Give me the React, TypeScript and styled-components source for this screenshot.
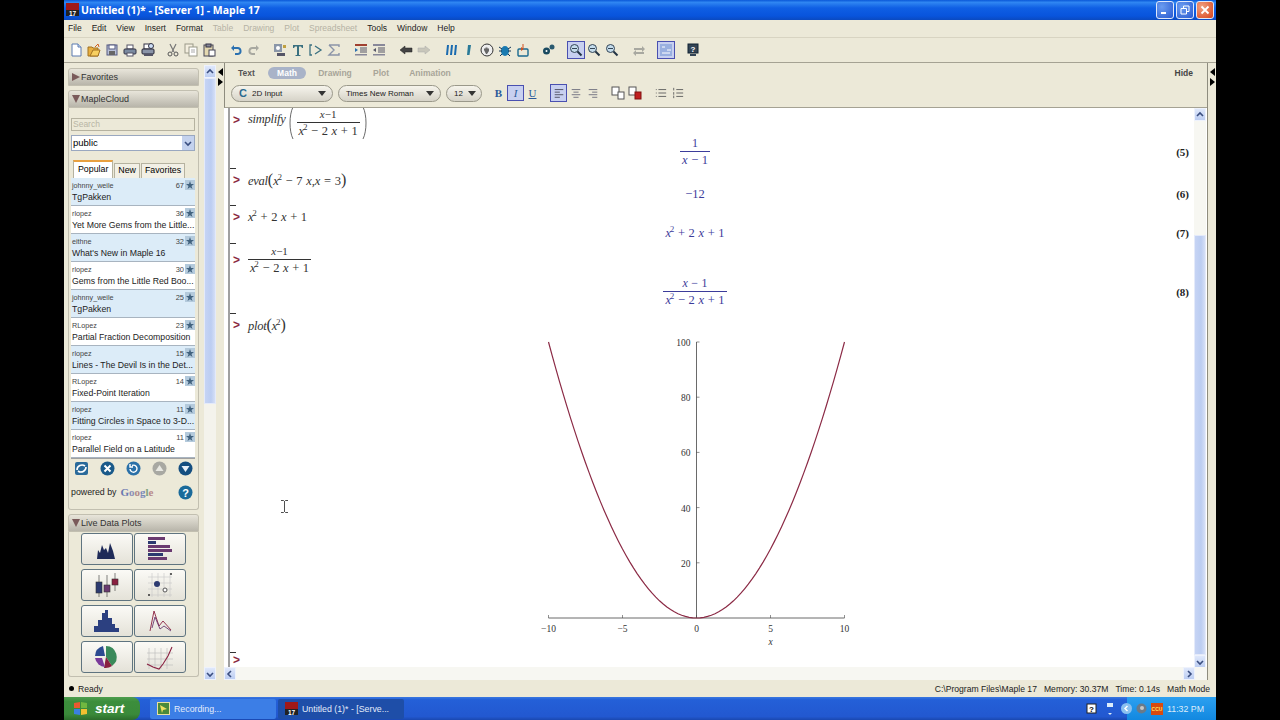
import React from "react";
import styled, {createGlobalStyle} from "styled-components";

const GlobalStyle = createGlobalStyle`
  html, body {
    margin: 0;
    padding: 0;
    background: #000;
  }
  body {
    font-family: "Liberation Sans", "DejaVu Sans", sans-serif;
  }
`;

const Screen = styled.div`
  width: 1280px;
  height: 720px;
  background: #000;
  display: flex;
  justify-content: center;
  overflow: hidden;
`;

const Desk = styled.div`
  width: 1152px;
  height: 720px;
  display: flex;
  flex-direction: column;
  background: #ece9d8;
  position: relative;
`;

/* title bar */
const TitleBar = styled.div`
  height: 20px;
  display: flex;
  align-items: center;
  padding: 0 2px;
  background: linear-gradient(180deg, #0a58d8 0%, #2f86f2 12%, #0f5fe4 40%, #0854dc 80%, #0a4ac0 100%);
`;

const TitleText = styled.span`
  flex: 1;
  margin-left: 2px;
  color: #fff;
  font: bold 10.5px "Open Sans", "Liberation Sans", sans-serif;
  white-space: nowrap;
`;

const WinButton = styled.div<{ $close?: boolean }>`
  width: 16px;
  height: 16px;
  margin-left: 2px;
  border: 1px solid #dfe8fa;
  border-radius: 3px;
  background: ${p => p.$close
    ? "radial-gradient(circle at 30% 30%, #f0a080, #d8441c)"
    : "radial-gradient(circle at 30% 30%, #6a9cf0, #2a5ad0)"};
  display: flex;
  align-items: center;
  justify-content: center;
`;

/* menu */
const MenuBar = styled.div`
  height: 17px;
  display: flex;
  align-items: center;
  padding-left: 4px;
  gap: 10px;
  font-size: 8.5px;
  color: #222;
  border-bottom: 1px solid #d8d4c2;
`;

const MenuItem = styled.span<{ $off?: boolean }>`
  color: ${p => p.$off ? "#b5b2a4" : "#222"};
`;

/* main toolbar */
const ToolBar = styled.div`
  height: 25px;
  display: flex;
  align-items: center;
  padding-left: 3px;
  border-bottom: 1px solid #a5a293;
`;

const ToolGroup = styled.div<{ $after: number }>`
  display: flex;
  align-items: center;
  margin-right: ${p => p.$after}px;
`;

const Tool = styled.div<{ $on?: boolean; $w?: number }>`
  width: ${p => p.$w ?? 18}px;
  height: 18px;
  box-sizing: border-box;
  display: flex;
  align-items: center;
  justify-content: center;
  border: 1px solid ${p => p.$on ? "#4a50b0" : "transparent"};
  background: ${p => p.$on ? "#c8d0f0" : "transparent"};
`;

/* body */
const Body = styled.div`
  height: 617px;
  display: flex;
`;

const Side = styled.div`
  width: 140px;
  box-sizing: border-box;
  padding: 5px 5px 3px 4px;
  display: flex;
  flex-direction: column;
  gap: 4px;
`;

const PanelHead = styled.div`
  height: 18px;
  box-sizing: border-box;
  display: flex;
  align-items: center;
  gap: 1px;
  padding-left: 3px;
  border: 1px solid #c2bfb0;
  border-radius: 3px 3px 0 0;
  background: linear-gradient(180deg, #e8e5da, #b8b5aa);
  font-size: 9px;
  color: #333;
`;

const Arrow = styled.span<{ $open?: boolean }>`
  width: 0;
  height: 0;
  ${p => p.$open
    ? "border-left: 4px solid transparent; border-right: 4px solid transparent; border-top: 8px solid #7a5a5a;"
    : "border-top: 4px solid transparent; border-bottom: 4px solid transparent; border-left: 8px solid #7a5a5a;"}
`;

const Panel = styled.div`
  box-sizing: border-box;
  border: 1px solid #c2bfb0;
  border-top: 0;
  border-radius: 0 0 3px 3px;
  display: flex;
  flex-direction: column;
`;

const CloudBody = styled(Panel)`
  height: 402px;
  padding: 10px 2px 0 2px;
`;

const SearchBox = styled.div`
  height: 13px;
  margin-right: 1px;
  box-sizing: border-box;
  border: 1px solid #b5b2a0;
  color: #b8b5a5;
  font-size: 8.5px;
  line-height: 11px;
  padding-left: 1px;
`;

const PublicBox = styled.div`
  height: 16px;
  margin: 4px 1px 0 0;
  box-sizing: border-box;
  border: 1px solid #9aa8c0;
  background: #fff;
  font-size: 9.5px;
  line-height: 14px;
  padding-left: 1px;
  display: flex;
  justify-content: space-between;
`;

const DropBtn = styled.div`
  width: 12px;
  background: #c4d2ee;
  display: flex;
  align-items: center;
  justify-content: center;
`;

const Tabs = styled.div`
  display: flex;
  align-items: flex-end;
  height: 19px;
  margin-top: 8px;
  padding-left: 2px;
  gap: 1px;
`;

const TabItem = styled.div<{ $on?: boolean }>`
  height: ${p => p.$on ? 18 : 15}px;
  box-sizing: border-box;
  padding: 0 ${p => p.$on ? 4 : 3}px;
  font-size: 8.8px;
  line-height: ${p => p.$on ? 15 : 13}px;
  border: 1px solid #b5b2a0;
  border-bottom: 0;
  border-top: ${p => p.$on ? "2px solid #e8a040" : "1px solid #b5b2a0"};
  background: ${p => p.$on ? "#fff" : "#f2f0e6"};
`;

const List = styled.div`
  height: 280px;
  margin-right: 1px;
  border-bottom: 1px solid #a0a0a0;
  display: flex;
  flex-direction: column;
  overflow: hidden;
`;

const ListRow = styled.div<{ $tint: boolean }>`
  height: 28px;
  flex: none;
  box-sizing: border-box;
  padding: 1px 0 0 1px;
  border-bottom: 1px solid #a8b4c0;
  background: ${p => p.$tint ? "#dcecf8" : "#fff"};
`;

const RowTop = styled.div`
  height: 12px;
  display: flex;
  align-items: center;
  justify-content: space-between;
  font-size: 7.2px;
  color: #444;
`;

const RowCount = styled.span`
  display: flex;
  align-items: center;
  gap: 1px;
  font-size: 7.5px;
`;

const RowTitle = styled.div`
  font-size: 8.7px;
  line-height: 13px;
  color: #222;
  white-space: nowrap;
`;

const NavRow = styled.div`
  height: 19px;
  padding: 0 3px;
  display: flex;
  align-items: center;
  justify-content: space-between;
`;

const PoweredRow = styled.div`
  height: 24px;
  margin-top: 2px;
  padding: 0 3px 0 0;
  display: flex;
  align-items: center;
  font-size: 8.8px;
  color: #222;
  gap: 4px;
`;

const GoogleWord = styled.span`
  flex: 1;
  font: bold 11px "Liberation Serif", serif;
`;

const GoogleLetter = styled.span<{ $c: string }>`
  color: ${p => p.$c};
`;

const LiveBody = styled(Panel)`
  height: 145px;
  padding: 1px 0 0 12px;
  display: grid;
  grid-template-columns: 52px 52px;
  grid-auto-rows: 32px;
  gap: 4px 1px;
  align-content: start;
`;

const PlotBtn = styled.div`
  box-sizing: border-box;
  border: 1px solid #5f7480;
  border-radius: 3px;
  background: linear-gradient(180deg, #fbfaf6, #e4e2d8);
  display: flex;
  align-items: center;
  justify-content: center;
`;

const ScrollCol = styled.div`
  width: 12px;
  margin-top: 2px;
  height: 615px;
  display: flex;
  flex-direction: column;
  background: #f4f3ec;
`;

const ScrollBtn = styled.div<{ $side?: boolean }>`
  flex: none;
  width: ${p => p.$side ? "12px" : "auto"};
  height: ${p => p.$side ? "auto" : "13px"};
  background: linear-gradient(180deg, #dfe8fb, #bccdf2);
  border: 1px solid #eef2fc;
  box-sizing: border-box;
  display: flex;
  align-items: center;
  justify-content: center;
`;

const ScrollThumb = styled.div<{ $h: number }>`
  height: ${p => p.$h}px;
  flex: none;
  background: linear-gradient(90deg, #c6d4f4, #bccdf2 60%, #d5dff6);
  border: 1px solid #e4eafa;
  box-sizing: border-box;
`;

const ScrollRest = styled.div<{ $h?: number }>`
  flex: ${p => p.$h ? "none" : 1};
  height: ${p => p.$h ? `${p.$h}px` : "auto"};
`;

const Splitter = styled.div`
  width: 8px;
  padding: 5px 0 0 2px;
  box-sizing: border-box;
  display: flex;
  flex-direction: column;
  gap: 2px;
`;

const Tri = styled.span<{ $dir: "l" | "r" }>`
  width: 0;
  height: 0;
  border-top: 4px solid transparent;
  border-bottom: 4px solid transparent;
  ${p => p.$dir === "l" ? "border-right: 5px solid #000;" : "border-left: 5px solid #000;"}
`;

const Main = styled.div`
  width: 984px;
  display: flex;
  flex-direction: column;
  border-right: 1px solid #8e8c7e;
  box-sizing: border-box;
`;

const PaletteTop = styled.div`
  height: 45px;
  flex: none;
  box-sizing: border-box;
  border-bottom: 1px solid #a5a293;
  border-left: 1px solid #8e8c7e;
`;

const ModeRow = styled.div`
  height: 19px;
  display: flex;
  align-items: center;
  padding-left: 13px;
  font-size: 8.5px;
  font-weight: bold;
  color: #a8a598;
`;

const ModeTab = styled.span<{ $on?: boolean; $dark?: boolean; $w: number }>`
  width: ${p => p.$w}px;
  height: 12px;
  line-height: 12px;
  text-align: ${p => p.$dark ? "left" : "center"};
  border-radius: 6px;
  color: ${p => p.$on ? "#fff" : p.$dark ? "#555" : "#a8a598"};
  background: ${p => p.$on ? "#a9b3c8" : "transparent"};
`;

const HideLabel = styled.span`
  margin-left: auto;
  margin-right: 14px;
  color: #444;
`;

const CtxRow = styled.div`
  height: 22px;
  display: flex;
  align-items: center;
  padding-left: 6px;
`;

const Pill = styled.div<{ $w: number }>`
  width: ${p => p.$w}px;
  height: 17px;
  box-sizing: border-box;
  margin-right: 5px;
  padding: 0 6px 0 7px;
  border: 1px solid #9a988a;
  border-radius: 9px;
  background: linear-gradient(180deg, #f6f4ec, #d6d3c8);
  display: flex;
  align-items: center;
  gap: 5px;
  font-size: 8px;
  color: #222;
`;

const InputMark = styled.b`
  color: #2a6a90;
  font-size: 11px;
`;

const PillArrow = styled.span`
  margin-left: auto;
  border-left: 4px solid transparent;
  border-right: 4px solid transparent;
  border-top: 5px solid #333;
`;

const CtxGroup = styled.div<{ $m: number }>`
  display: flex;
  align-items: center;
  margin-left: ${p => p.$m}px;
`;

const FmtBtn = styled(Tool)<{ $i?: boolean; $b?: boolean; $u?: boolean }>`
  width: 17px;
  height: 16px;
  font: ${p => p.$b ? "bold" : "normal"} 11px "Liberation Serif", serif;
  font-style: ${p => p.$i ? "italic" : "normal"};
  text-decoration: ${p => p.$u ? "underline" : "none"};
  color: #2a5a9a;
`;

const SheetWrap = styled.div`
  flex: 1;
  display: flex;
  min-height: 0;
  background: #fff;
  padding-left: 4px;
`;

const Sheet = styled.div`
  flex: 1;
  height: 559px;
  overflow: hidden;
  border-left: 2px solid #a0a0a0;
  display: flex;
  flex-direction: column;
`;

const VScroll = styled.div`
  width: 12px;
  flex: none;
  display: flex;
  flex-direction: column;
  background: #f7f7f2;
  margin-right: 1px;
`;

const HScroll = styled.div`
  height: 13px;
  flex: none;
  display: flex;
  background: #f7f7f2;
  padding-right: 12px;
`;

const Tick = styled.div`
  height: 1px;
  width: 6px;
  flex: none;
  background: #333;
`;

const Gap = styled.div<{ $h: number }>`
  height: ${p => p.$h}px;
  flex: none;
`;

const InputRow = styled.div<{ $h: number }>`
  height: ${p => p.$h}px;
  flex: none;
  display: flex;
  align-items: center;
  padding-left: 3px;
  font: 12.5px/1 "Liberation Serif", serif;
  color: #333;
`;

const Prompt = styled.span`
  flex: none;
  width: 15px;
  color: #8a2a40;
  font: bold 12px "Liberation Sans", sans-serif;
`;

const LiftedPrompt = styled(Prompt)`
  margin-bottom: 6px;
`;

const OutRow = styled.div<{ $h: number }>`
  height: ${p => p.$h}px;
  flex: none;
  display: grid;
  grid-template-columns: 930px 1fr;
  grid-template-rows: ${p => p.$h}px;
  align-items: center;
  font: 12.5px/1 "Liberation Serif", serif;
  color: #3c3c9a;
`;

const OutMath = styled.div`
  display: flex;
  justify-content: center;
`;

const EqLabel = styled.span`
  text-align: right;
  padding-right: 5px;
  color: #222;
  font: bold 11px "Liberation Serif", serif;
`;

const Frac = styled.span<{ $ml?: number }>`
  display: inline-flex;
  flex-direction: column;
  align-items: center;
  white-space: nowrap;
  margin-left: ${p => p.$ml ?? 0}px;
`;

const FracTop = styled.span<{ $small?: boolean }>`
  padding: 0 2px 2px;
  font-size: ${p => p.$small ? 11 : 12}px;
`;

const FracBot = styled.span`
  align-self: stretch;
  text-align: center;
  border-top: 1px solid currentColor;
  padding: 2px 2px 0;
  font-size: 12.5px;
`;

const Var = styled.i``;
const Word = styled.i`
  letter-spacing: -0.25px;
`;
const LiftedWord = styled(Word)`
  margin-bottom: 8px;
`;
const Sup = styled.sup`
  font-size: 8.5px;
  line-height: 0;
  margin-left: -1px;
`;
const Paren = styled.span`
  font-size: 16px;
`;
const Line = styled.span`
  white-space: nowrap;
  word-spacing: 0.5px;
`;

const ParenSvg = styled.svg<{ $flip?: boolean }>`
  flex: none;
  margin: 0 2px;
  transform: ${p => p.$flip ? "scaleX(-1)" : "none"};
`;

const Caret = styled.svg`
  position: absolute;
  left: 217px;
  top: 500px;
`;

/* status bar + taskbar */
const StatusBar = styled.div`
  height: 17px;
  display: flex;
  align-items: center;
  padding: 0 6px 0 5px;
  font-size: 8.6px;
  color: #222;
`;

const ReadyDot = styled.span`
  width: 5px;
  height: 5px;
  border-radius: 50%;
  background: #000;
  margin-right: 4px;
`;

const StatusRight = styled.div`
  margin-left: auto;
  display: flex;
  gap: 7px;
`;

const TaskBar = styled.div`
  height: 23px;
  display: flex;
  align-items: center;
  background: linear-gradient(180deg, #3a78e0 0%, #2460d8 12%, #2258d0 85%, #1a48b0 100%);
`;

const StartBtn = styled.div`
  width: 76px;
  height: 23px;
  box-sizing: border-box;
  padding-left: 9px;
  display: flex;
  align-items: center;
  gap: 7px;
  border-radius: 0 8px 8px 0;
  background: linear-gradient(180deg, #4e9e4e 0%, #3c8e3c 20%, #3a8a3a 75%, #2c6c2c 100%);
  color: #fff;
  font: italic bold 13.5px "Liberation Sans", sans-serif;
`;

const TaskBtn = styled.div<{ $active?: boolean }>`
  width: 126px;
  height: 20px;
  margin-left: ${p => p.$active ? 2 : 10}px;
  box-sizing: border-box;
  padding-left: 7px;
  display: flex;
  align-items: center;
  gap: 4px;
  border-radius: 2px;
  font-size: 8.8px;
  white-space: nowrap;
  color: #e4ecfa;
  background: ${p => p.$active ? "#1e4ea8" : "#3c7ee6"};
`;

const TrayLeft = styled.div`
  margin-left: auto;
  margin-right: 11px;
  display: flex;
  align-items: center;
  gap: 8px;
`;

const Tray = styled.div`
  width: 89px;
  height: 23px;
  box-sizing: border-box;
  padding: 0 12px 0 0;
  display: flex;
  align-items: center;
  gap: 4px;
  background: linear-gradient(180deg, #2ca0f0, #1288e0);
  color: #dcecfa;
  font-size: 8.8px;
`;

const TrayChevron = styled.svg`
  flex: none;
  margin-left: -6px;
`;

const TrayClock = styled.span`
  margin-left: auto;
  white-space: nowrap;
`;

/* drawings */
const Svg = ({w = 14, h = 14, vb = "0 0 14 14", children}: { w?: number, h?: number, vb?: string, children: React.ReactNode }) => (
    <svg width={w} height={h} viewBox={vb}>{children}</svg>
);

const toolIcons: Record<string, React.ReactNode> = {
    page: <><path d="M3 1h6l3 3v9H3z" fill="#fff" stroke="#5a7ab0"/><path d="M9 1v3h3" fill="#cfe0f8" stroke="#5a7ab0"/></>,
    open: <><path d="M1 4h4l1 1h5v8H1z" fill="#e8b040" stroke="#a07020"/><path d="M3 13l3-6h7l-2 6z" fill="#f8d060" stroke="#a07020"/><path d="M8 4l3-3 1 3" fill="none" stroke="#d06020"/></>,
    save: <><rect x="2" y="2" width="10" height="10" fill="#b8c0d8" stroke="#555a80"/><rect x="4" y="2" width="6" height="4" fill="#fff" stroke="#555a80"/><rect x="4" y="8" width="6" height="4" fill="#666"/></>,
    print: <><rect x="4" y="2" width="6" height="4" fill="#fff" stroke="#556"/><rect x="1" y="6" width="12" height="5" rx="1" fill="#7a8aa0" stroke="#334"/><rect x="4" y="10" width="6" height="3" fill="#fff" stroke="#556"/></>,
    preview: <><rect x="3" y="1" width="7" height="5" fill="#fff" stroke="#334"/><rect x="1" y="6" width="12" height="5" rx="1" fill="#8a94a8" stroke="#223"/><circle cx="10" cy="3" r="2.5" fill="#cfe0f8" stroke="#334"/><rect x="3" y="11" width="9" height="2" fill="#556"/></>,
    cut: <><path d="M4 1l4 8M10 1L6 9" stroke="#777" strokeWidth="1.2" fill="none"/><circle cx="4" cy="11" r="2" fill="none" stroke="#555"/><circle cx="10" cy="11" r="2" fill="none" stroke="#555"/></>,
    copy: <><rect x="1" y="1" width="8" height="9" fill="#f4efe0" stroke="#998"/><rect x="5" y="4" width="8" height="9" fill="#fff" stroke="#998"/><path d="M7 7h4M7 9h4" stroke="#aaa"/></>,
    paste: <><rect x="2" y="2" width="9" height="11" fill="#e4d8b0" stroke="#445"/><rect x="4" y="1" width="5" height="3" fill="#889" stroke="#334"/><rect x="7" y="7" width="6" height="6" fill="#fff" stroke="#445"/></>,
    undo: <path d="M2 5l3-3v2h3a4 4 0 0 1 1 8H6v-2h3a2 2 0 0 0-1-4H5v2z" fill="#2a70b0"/>,
    redo: <path d="M12 5L9 2v2H6a4 4 0 0 0-1 8h3v-2H5a2 2 0 0 1 1-4h3v2z" fill="#a8a8a0"/>,
    exec: <><rect x="1" y="1" width="8" height="8" fill="#8a96a8"/><circle cx="5" cy="5" r="2" fill="#fff"/><rect x="10" y="2" width="3" height="3" fill="#c0a040"/><rect x="4" y="10" width="8" height="3" fill="#556"/></>,
    text: <path d="M2 2h10v3h-1l-1-1.500H8V12h1.500v1h-5v-1H6V3.500H4L3 5H2z" fill="#3a7080"/>,
    prompt: <path d="M3 2H1v10h2M6 3l6 4-6 4" fill="none" stroke="#3a7080" strokeWidth="1.3"/>,
    sigma: <path d="M2 2h10v2M2 2l5 5-5 5h10v-2" fill="none" stroke="#8a94a8" strokeWidth="1.4"/>,
    indent: <><rect x="1" y="1" width="12" height="2" fill="#a04030"/><path d="M6 5h7M6 7h7M6 9h7" stroke="#556"/><path d="M1 5l3 2-3 2z" fill="#2a70b0"/><rect x="1" y="11" width="12" height="1.500" fill="#889"/></>,
    outdent: <><rect x="1" y="1" width="12" height="2" fill="#889"/><path d="M6 5h7M6 7h7M6 9h7" stroke="#556"/><path d="M4 5L1 7l3 2z" fill="#556"/><rect x="1" y="11" width="12" height="1.500" fill="#889"/></>,
    back: <path d="M1 7l5-4v2h7v4H6v2z" fill="#444" stroke="#222" strokeWidth=".5"/>,
    fwd: <path d="M13 7L8 3v2H1v4h7v2z" fill="#c8c6ba" stroke="#aaa" strokeWidth=".5"/>,
    bangs: <path d="M3 2h2L4 12H2zM7 2h2L8 12H6zM11 2h2l-1 10h-2z" fill="#1a6ab0"/>,
    bang: <path d="M6 2h3L7.500 12H5z" fill="#2a7a98"/>,
    stop: <><circle cx="7" cy="7" r="6" fill="#eee" stroke="#333"/><path d="M4 7V5l1 1V4l1 2V3.500l1 2V4l1 2 1-1v3l-2 3H6z" fill="#666"/></>,
    bug: <><ellipse cx="7" cy="8" rx="4" ry="5" fill="#1a7ab0"/><path d="M1 4l3 2M13 4l-3 2M1 8h3M13 8h-3M2 13l2-2M12 13l-2-2" stroke="#135"/></>,
    restart: <><rect x="2" y="6" width="10" height="7" rx="1" fill="none" stroke="#1a6a90" strokeWidth="1.4"/><path d="M5 4l3 2-3 2z" fill="#d05020"/><path d="M7 1v4" stroke="#d05020"/></>,
    gears: <><circle cx="5.500" cy="8" r="3.500" fill="#1a4a60"/><circle cx="5.500" cy="8" r="1" fill="#fff"/><circle cx="11" cy="4" r="2.500" fill="#2a5a70"/></>,
    zoom: <><circle cx="5.500" cy="5.500" r="4" fill="#c4dcec" stroke="#345"/><path d="M8.500 8.500l4 4" stroke="#234" strokeWidth="2"/><path d="M3 5.500h5" stroke="#345"/></>,
    swap: <path d="M2 5h8V3l3 3-3 3V7H2M12 9H4V7L1 10l3 3v-2h8" fill="#a8a8a0"/>,
    pane: <><rect x="1" y="1" width="12" height="12" fill="#9ab0e0"/><path d="M3 4h3M8 7h4M3 10h8" stroke="#fff"/></>,
    help: <><rect x="2" y="1" width="10" height="9" fill="#345" stroke="#123"/><text x="7" y="8.500" fontSize="8" fontWeight="bold" fill="#fff" textAnchor="middle">?</text><path d="M4 11h6v2H4z" fill="#345"/></>,
};

const Icon = ({name}: { name: string }) => <Svg>{toolIcons[name]}</Svg>;

// after = px of space up to the next group
const toolGroups: Array<{ after: number, tools: Array<string | [string, boolean]> }> = [
    {after: 7, tools: ["page", "open", "save", "print", "preview"]},
    {after: 9, tools: ["cut", "copy", "paste"]},
    {after: 8, tools: ["undo", "redo"]},
    {after: 9, tools: ["exec", "text", "prompt", "sigma"]},
    {after: 9, tools: ["indent", "outdent"]},
    {after: 9, tools: ["back", "fwd"]},
    {after: 7, tools: ["bangs", "bang", "stop", "bug", "restart"]},
    {after: 10, tools: ["gears"]},
    {after: 9, tools: [["zoom", true], "zoom", "zoom"]},
    {after: 9, tools: ["swap"]},
    {after: 9, tools: [["pane", true]]},
    {after: 0, tools: ["help"]},
];

const posts = [
    ["johnny_weile", "67", "TgPakken"],
    ["rlopez", "36", "Yet More Gems from the Little..."],
    ["eithne", "32", "What's New in Maple 16"],
    ["rlopez", "30", "Gems from the Little Red Boo..."],
    ["johnny_weile", "25", "TgPakken"],
    ["RLopez", "23", "Partial Fraction Decomposition"],
    ["rlopez", "15", "Lines - The Devil Is in the Det..."],
    ["RLopez", "14", "Fixed-Point Iteration"],
    ["rlopez", "11", "Fitting Circles in Space to 3-D..."],
    ["rlopez", "11", "Parallel Field on a Latitude"],
];

const PostIcon = () => (
    <Svg w={10} h={10} vb="0 0 10 10">
        <rect width="10" height="10" fill="#b4cadc"/>
        <path d="M5 1l1 3h3L6.500 6l1 3L5 7.200 2.500 9l1-3L1 4h3z" fill="#41627e"/>
    </Svg>
);

const Nav = ({glyph, fill = "#1a5a8a"}: { glyph: React.ReactNode, fill?: string }) => (
    <Svg w={15} h={15} vb="0 0 15 15">
        <circle cx="7.500" cy="7.500" r="7" fill={fill}/>
        {glyph}
    </Svg>
);

const navButtons = [
    <Svg key="a" w={15} h={15} vb="0 0 15 15">
        <rect x="1" y="1" width="13" height="13" rx="2" fill="#2a6a9a"/>
        <path d="M3 9a5 5 0 0 1 8-4M12 6a5 5 0 0 1-8 4" fill="none" stroke="#fff" strokeWidth="1.6"/>
    </Svg>,
    <Nav key="b" glyph={<path d="M4.500 4.500l6 6M10.500 4.500l-6 6" stroke="#fff" strokeWidth="2"/>}/>,
    <Nav key="c" fill="#2a70a8" glyph={<path d="M4 8a3.500 3.500 0 1 0 2-3.500M4 3v3h3" fill="none" stroke="#fff" strokeWidth="1.4"/>}/>,
    <Nav key="d" fill="#a8a8a2" glyph={<path d="M7.500 4l4 6h-8z" fill="#e8e8e2"/>}/>,
    <Nav key="e" fill="#144e80" glyph={<path d="M7.500 11l-4-6h8z" fill="#e8f0f8"/>}/>,
];

const B = "#2c3a70", P = "#6a3a70", R = "#8a2040";

const livePlots = [
    <path key="1" d="M6 23l1-9 2 3 2-8 2 5 2-2 2 5 2-10 3 8 2 8z" fill="#1e2a58"/>,
    <g key="2" fill={P}>
        <rect x="4" y="1" width="17" height="3"/><rect x="4" y="5" width="8" height="3" fill={B}/>
        <rect x="4" y="9" width="22" height="3"/><rect x="4" y="13" width="24" height="3"/>
        <rect x="4" y="17" width="15" height="3" fill={B}/><rect x="4" y="21" width="19" height="3"/>
    </g>,
    <g key="3" stroke="#333" strokeWidth=".6">
        <path d="M8 3v22M16 3v22M24 1v18" fill="none"/>
        <rect x="5" y="10" width="6" height="11" fill={B}/>
        <rect x="13" y="13" width="6" height="7" fill={P}/>
        <rect x="21" y="7" width="6" height="6" fill={R}/>
    </g>,
    <g key="4">
        <path d="M4 5h24M4 11h24M4 17h24M4 23h24M8 1v24M14 1v24M20 1v24M26 1v24" stroke="#c8c8c8" strokeWidth=".6"/>
        <circle cx="13" cy="12" r="3" fill={B}/><circle cx="21" cy="18" r="2" fill="#fff" stroke="#555"/>
        <circle cx="5" cy="23" r="1" fill="#333"/><circle cx="27" cy="2" r="1" fill="#333"/>
    </g>,
    <path key="5" d="M3 24v-6h4v-6h4V5h3V2h3v8h4v6h3v4h4v4z" fill="#2c4080"/>,
    <g key="6" fill="none" strokeWidth=".9">
        <path d="M6 23L10 3l5 15 4-5 8 9" stroke={R}/>
        <path d="M8 20l3-11 5 12 4-3 7 5" stroke={P}/>
    </g>,
    <g key="7">
        <path d="M15 13L15 2A11 11 0 0 1 21 22z" fill="#3a8a5a"/>
        <path d="M15 13l6 9a11 11 0 0 1-8 2z" fill={R}/>
        <path d="M11 14l3 9a11 11 0 0 1-10-9z" fill="#7a3a9a"/>
        <path d="M4 12a11 11 0 0 1 8-10l2 10z" fill="#2c4a90"/>
    </g>,
    <g key="8">
        <path d="M5 4v21M11 4v21M17 4v21M23 4v21M3 9h26M3 15h26M3 21h26" stroke="#bbb" strokeWidth=".6"/>
        <path d="M3 20l6 3 6 2 4-5 5-8 4-9" fill="none" stroke={R} strokeWidth="1.1"/>
    </g>,
];

const menus: Array<[string, boolean?]> = [
    ["File"], ["Edit"], ["View"], ["Insert"], ["Format"], ["Table", true], ["Drawing", true],
    ["Plot", true], ["Spreadsheet", true], ["Tools"], ["Window"], ["Help"],
];

const googleLetters: Array<[string, string]> = [
    ["G", "#6a78b0"], ["o", "#8a90b8"], ["o", "#b08a8a"], ["g", "#7a88b8"], ["l", "#80a080"], ["e", "#b88a8a"],
];

const TallParen = ({flip}: { flip?: boolean }) => (
    <ParenSvg $flip={flip} width="6" height="32" viewBox="0 0 6 32">
        <path d="M5 0C1 8 1 24 5 32" fill="none" stroke="#444" strokeWidth=".8"/>
    </ParenSvg>
);

const Poly = ({a = "x"}: { a?: string }) => (
    <Line><Var>x</Var><Sup>2</Sup> {a === "x" ? "−" : "+"} 2 <Var>x</Var> + 1</Line>
);

const XMinus = ({tight}: { tight?: boolean }) => (
    tight ? <Line><Var>x</Var>−1</Line> : <Line><Var>x</Var> − 1</Line>
);

const Parabola = () => {
    const ox = 166.5, oy = 282, sx = 14.8, sy = 2.76;
    const pts: string[] = [];
    for (let x = -10; x <= 10.001; x += 0.25) {
        pts.push(`${(ox + x * sx).toFixed(1)},${(oy - x * x * sy).toFixed(1)}`);
    }
    const yTicks = [20, 40, 60, 80, 100];
    const xTicks = [-10, -5, 0, 5, 10];
    return (
        <svg width="330" height="316" viewBox="0 0 330 316">
            <g fontFamily="Liberation Serif, serif" fontSize="9.500" fill="#333">
                <path d={`M${ox - 148} ${oy}H${ox + 148}M${ox} ${oy}V6`} stroke="#444" strokeWidth=".8" fill="none"/>
                {yTicks.map(t => (
                    <g key={t}>
                        <path d={`M${ox} ${oy - t * sy}h3`} stroke="#444" strokeWidth=".6"/>
                        <text x={ox - 6} y={oy - t * sy + 4} textAnchor="end">{t}</text>
                    </g>
                ))}
                {xTicks.map(t => (
                    <g key={t}>
                        <path d={`M${ox + t * sx} ${oy}v-3`} stroke="#444" strokeWidth=".6"/>
                        <text x={ox + t * sx} y={oy + 14} textAnchor="middle">{t < 0 ? `−${-t}` : t}</text>
                    </g>
                ))}
                <text x={ox + 74} y={oy + 27} textAnchor="middle" fontStyle="italic">x</text>
            </g>
            <polyline points={pts.join(" ")} fill="none" stroke="#8b2a45" strokeWidth="1.2"/>
        </svg>
    );
};

const Chevron = ({dir}: { dir: "up" | "down" | "left" | "right" }) => {
    const d = {up: "M2 6l3-3 3 3", down: "M2 4l3 3 3-3", left: "M6 2L3 5l3 3", right: "M4 2l3 3-3 3"}[dir];
    return (
        <Svg w={10} h={10} vb="0 0 10 10">
            <path d={d} fill="none" stroke="#3a4e80" strokeWidth="1.6"/>
        </Svg>
    );
};

const MapleLogo = () => (
    <Svg w={13} h={13} vb="0 0 13 13">
        <rect width="13" height="13" fill="#a01818"/>
        <rect y="7" width="13" height="6" fill="#222"/>
        <text x="6.500" y="12.500" fontSize="6.500" fontWeight="bold" fill="#fff" textAnchor="middle">17</text>
    </Svg>
);

const App = () => (
    <Screen>
        <GlobalStyle/>
        <Desk>
            <TitleBar>
                <MapleLogo/>
                <TitleText>Untitled (1)* - [Server 1] - Maple 17</TitleText>
                <WinButton>
                    <Svg w={10} h={10} vb="0 0 10 10"><rect x="1" y="7" width="5" height="2" fill="#fff"/></Svg>
                </WinButton>
                <WinButton>
                    <Svg w={10} h={10} vb="0 0 10 10"><path d="M1 3.500h5.500V9H1zM3.500 3V1H9v5.500H7" fill="none" stroke="#fff"/></Svg>
                </WinButton>
                <WinButton $close>
                    <Svg w={10} h={10} vb="0 0 10 10"><path d="M1.500 1.500l7 7M8.500 1.500l-7 7" stroke="#fff" strokeWidth="1.800"/></Svg>
                </WinButton>
            </TitleBar>
            <MenuBar>
                {menus.map(([m, off]) => <MenuItem key={m} $off={off}>{m}</MenuItem>)}
            </MenuBar>
            <ToolBar>
                {toolGroups.map((g, i) => (
                    <ToolGroup key={i} $after={g.after}>
                        {g.tools.map((t, j) => {
                            const name = typeof t === "string" ? t : t[0];
                            const on = typeof t !== "string";
                            return <Tool key={j} $on={on}><Icon name={name}/></Tool>;
                        })}
                    </ToolGroup>
                ))}
            </ToolBar>
            <Body>
                <Side>
                    <PanelHead><Arrow/>Favorites</PanelHead>
                    <div>
                        <PanelHead><Arrow $open/>MapleCloud</PanelHead>
                        <CloudBody>
                            <SearchBox>Search</SearchBox>
                            <PublicBox>public<DropBtn><Chevron dir="down"/></DropBtn></PublicBox>
                            <Tabs>
                                <TabItem $on>Popular</TabItem>
                                <TabItem>New</TabItem>
                                <TabItem>Favorites</TabItem>
                            </Tabs>
                            <List>
                                {posts.map(([who, n, title], i) => (
                                    <ListRow key={i} $tint={i % 2 === 0}>
                                        <RowTop>
                                            <span>{who}</span>
                                            <RowCount>{n}<PostIcon/></RowCount>
                                        </RowTop>
                                        <RowTitle>{title}</RowTitle>
                                    </ListRow>
                                ))}
                            </List>
                            <NavRow>{navButtons}</NavRow>
                            <PoweredRow>
                                powered by
                                <GoogleWord>
                                    {googleLetters.map(([l, c], i) => <GoogleLetter key={i} $c={c}>{l}</GoogleLetter>)}
                                </GoogleWord>
                                <Nav fill="#1a6a9a" glyph={<text x="7.500" y="11.500" fontSize="11" fontWeight="bold" fill="#fff" textAnchor="middle">?</text>}/>
                            </PoweredRow>
                        </CloudBody>
                    </div>
                    <div>
                        <PanelHead><Arrow $open/>Live Data Plots</PanelHead>
                        <LiveBody>
                            {livePlots.map((p, i) => (
                                <PlotBtn key={i}><Svg w={32} h={26} vb="0 0 32 26">{p}</Svg></PlotBtn>
                            ))}
                        </LiveBody>
                    </div>
                </Side>
                <ScrollCol>
                    <ScrollBtn><Chevron dir="up"/></ScrollBtn>
                    <ScrollThumb $h={326}/>
                    <ScrollRest/>
                    <ScrollBtn><Chevron dir="down"/></ScrollBtn>
                </ScrollCol>
                <Splitter><Tri $dir="l"/><Tri $dir="r"/></Splitter>
                <Main>
                    <PaletteTop>
                        <ModeRow>
                            <ModeTab $w={30} $dark>Text</ModeTab>
                            <ModeTab $w={38} $on>Math</ModeTab>
                            <ModeTab $w={58}>Drawing</ModeTab>
                            <ModeTab $w={34}>Plot</ModeTab>
                            <ModeTab $w={64}>Animation</ModeTab>
                            <HideLabel>Hide</HideLabel>
                        </ModeRow>
                        <CtxRow>
                            <Pill $w={102}>
                                <InputMark>C</InputMark> 2D Input<PillArrow/>
                            </Pill>
                            <Pill $w={103}>Times New Roman<PillArrow/></Pill>
                            <Pill $w={36}>12<PillArrow/></Pill>
                            <CtxGroup $m={3}>
                                <FmtBtn $b>B</FmtBtn>
                                <FmtBtn $on $i>I</FmtBtn>
                                <FmtBtn $u>U</FmtBtn>
                            </CtxGroup>
                            <CtxGroup $m={9}>
                                <Tool $w={17} $on><Svg w={12} h={12}><path d="M2 3h10M2 6h6M2 9h10M2 12h6" stroke="#445"/></Svg></Tool>
                                <Tool $w={17}><Svg w={12} h={12}><path d="M2 3h10M4 6h6M2 9h10M4 12h6" stroke="#667"/></Svg></Tool>
                                <Tool $w={17}><Svg w={12} h={12}><path d="M2 3h10M6 6h6M2 9h10M6 12h6" stroke="#667"/></Svg></Tool>
                            </CtxGroup>
                            <CtxGroup $m={8}>
                                <Tool $w={17}><Svg><rect x="1" y="1" width="7" height="8" fill="#fff" stroke="#555"/><rect x="7" y="6" width="6" height="7" fill="#fff" stroke="#555"/></Svg></Tool>
                                <Tool $w={17}><Svg><rect x="1" y="1" width="7" height="8" fill="#fff" stroke="#555"/><rect x="7" y="6" width="6" height="7" fill="#c02020" stroke="#801010"/></Svg></Tool>
                            </CtxGroup>
                            <CtxGroup $m={9}>
                                <Tool $w={17}><Svg w={12} h={12}><path d="M4 3h9M4 7h9M4 11h9M1 3h1M1 7h1M1 11h1" stroke="#555"/></Svg></Tool>
                                <Tool $w={17}><Svg w={12} h={12}><path d="M5 3h8M5 7h8M5 11h8M2 1v3M2 6v3M2 10v3" stroke="#555"/></Svg></Tool>
                            </CtxGroup>
                        </CtxRow>
                    </PaletteTop>
                    <SheetWrap>
                        <Sheet>
                            <InputRow $h={30}>
                                <LiftedPrompt>&gt;</LiftedPrompt>
                                <LiftedWord>simplify</LiftedWord>
                                <TallParen/>
                                <Frac $ml={1}><FracTop $small><XMinus tight/></FracTop><FracBot><Poly/></FracBot></Frac>
                                <TallParen flip/>
                            </InputRow>
                            <OutRow $h={28}>
                                <OutMath><Frac><FracTop>1</FracTop><FracBot><XMinus/></FracBot></Frac></OutMath>
                                <EqLabel>(5)</EqLabel>
                            </OutRow>
                            <Gap $h={2}/>
                            <Tick/>
                            <InputRow $h={22}>
                                <Prompt>&gt;</Prompt>
                                <Line>
                                    <Word>eval</Word><Paren>(</Paren><Var>x</Var><Sup>2</Sup> − 7 <Var>x</Var>,<Var>x</Var> = 3<Paren>)</Paren>
                                </Line>
                            </InputRow>
                            <OutRow $h={6}>
                                <OutMath>−12</OutMath>
                                <EqLabel>(6)</EqLabel>
                            </OutRow>
                            <Gap $h={8}/>
                            <Tick/>
                            <InputRow $h={22}>
                                <Prompt>&gt;</Prompt>
                                <Poly a="+"/>
                            </InputRow>
                            <OutRow $h={10}>
                                <OutMath><Poly a="+"/></OutMath>
                                <EqLabel>(7)</EqLabel>
                            </OutRow>
                            <Gap $h={5}/>
                            <Tick/>
                            <InputRow $h={32}>
                                <Prompt>&gt;</Prompt>
                                <Frac><FracTop $small><XMinus tight/></FracTop><FracBot><Poly/></FracBot></Frac>
                            </InputRow>
                            <OutRow $h={32}>
                                <OutMath><Frac><FracTop><XMinus/></FracTop><FracBot><Poly/></FracBot></Frac></OutMath>
                                <EqLabel>(8)</EqLabel>
                            </OutRow>
                            <Gap $h={5}/>
                            <Tick/>
                            <InputRow $h={22}>
                                <Prompt>&gt;</Prompt>
                                <Line>
                                    <Word>plot</Word><Paren>(</Paren><Var>x</Var><Sup>2</Sup><Paren>)</Paren>
                                </Line>
                            </InputRow>
                            <OutRow $h={316}>
                                <OutMath><Parabola/></OutMath>
                            </OutRow>
                            <Tick/>
                            <InputRow $h={14}>
                                <Prompt>&gt;</Prompt>
                            </InputRow>
                        </Sheet>
                        <VScroll>
                            <ScrollBtn><Chevron dir="up"/></ScrollBtn>
                            <ScrollRest $h={114}/>
                            <ScrollThumb $h={420}/>
                            <ScrollBtn><Chevron dir="down"/></ScrollBtn>
                        </VScroll>
                    </SheetWrap>
                    <HScroll>
                        <ScrollBtn $side><Chevron dir="left"/></ScrollBtn>
                        <ScrollRest/>
                        <ScrollBtn $side><Chevron dir="right"/></ScrollBtn>
                    </HScroll>
                </Main>
                <Splitter><Tri $dir="l"/><Tri $dir="r"/></Splitter>
            </Body>
            <StatusBar>
                <ReadyDot/>Ready
                <StatusRight>
                    <span>C:\Program Files\Maple 17</span>
                    <span>Memory: 30.37M</span>
                    <span>Time: 0.14s</span>
                    <span>Math Mode</span>
                </StatusRight>
            </StatusBar>
            <TaskBar>
                <StartBtn>
                    <Svg w={15} h={15} vb="0 0 15 15">
                        <path d="M1 2l6-1v6H1z" fill="#e85a30"/><path d="M8 1l6 1v5H8z" fill="#70b840"/>
                        <path d="M1 8h6v6l-6-1z" fill="#3a80e0"/><path d="M8 8h6v5l-6 1z" fill="#f0c030"/>
                    </Svg>
                    start
                </StartBtn>
                <TaskBtn>
                    <Svg w={13} h={13} vb="0 0 13 13">
                        <rect x=".5" y=".5" width="12" height="12" fill="#4a8a3a" stroke="#e8e0a0"/>
                        <path d="M3 3l7 4-4 1-1 3z" fill="#f0e060"/>
                    </Svg>
                    Recording...
                </TaskBtn>
                <TaskBtn $active><MapleLogo/>Untitled (1)* - [Serve...</TaskBtn>
                <TrayLeft>
                    <Svg w={11} h={11} vb="0 0 11 11"><rect x="1" y="1" width="9" height="9" fill="#fff" stroke="#222"/><text x="5.500" y="9" fontSize="8" fontWeight="bold" textAnchor="middle">?</text></Svg>
                    <Svg w={11} h={14} vb="0 0 11 14"><rect x="2" y="1" width="6" height="4" fill="#dcecfa"/><path d="M3 11h4l-2 2z" fill="#dcecfa"/></Svg>
                </TrayLeft>
                <Tray>
                    <TrayChevron width="11" height="11" viewBox="0 0 11 11"><circle cx="5.500" cy="5.500" r="5.500" fill="#8ac0f0"/><path d="M6.500 3L4 5.500 6.500 8" fill="none" stroke="#fff" strokeWidth="1.500"/></TrayChevron>
                    <Svg w={11} h={11} vb="0 0 11 11"><circle cx="5.500" cy="5.500" r="5" fill="#6a7a8a"/><circle cx="6" cy="5" r="2" fill="#c8c8c8"/></Svg>
                    <Svg w={12} h={12} vb="0 0 12 12"><rect width="12" height="12" fill="#d84a10"/><text x="6" y="8" fontSize="5" fontWeight="bold" fill="#ffe060" textAnchor="middle">CCU</text></Svg>
                    <TrayClock>11:32 PM</TrayClock>
                </Tray>
            </TaskBar>
            <Caret width="7" height="13" viewBox="0 0 7 13">
                <path d="M0 .5h2.500L3.500 1.500 4.500 .5H7M3.500 1.500v10M0 12.500h2.500l1-1 1 1H7" fill="none" stroke="#222" strokeWidth=".8"/>
            </Caret>
        </Desk>
    </Screen>
);

export default App;
